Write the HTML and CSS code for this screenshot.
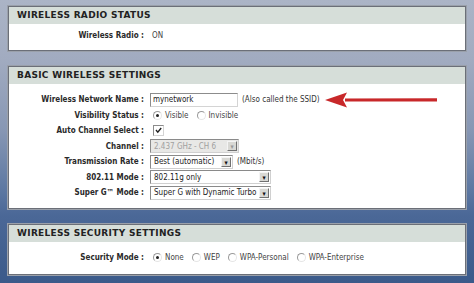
FILE: index.html
```html
<!DOCTYPE html>
<html lang="en">
<head>
  <meta charset="UTF-8" />
  <title>Wireless Settings</title>
  <link rel="stylesheet" href="styles.css">
</head>
<body>
  <div class="page">
    <div class="panel">
      <div class="panel-head">WIRELESS RADIO STATUS</div>
      <div class="panel-body radio-status">
        <div class="row">
          <span class="label">Wireless Radio :</span>
          <span class="value">ON</span>
        </div>
      </div>
    </div>

    <div class="panel">
      <div class="panel-head">BASIC WIRELESS SETTINGS</div>
      <div class="panel-body basic">
        <div class="row">
          <span class="label">Wireless Network Name :</span>
          <span class="value">
            <span class="text-input">mynetwork</span>
            <span class="note">(Also called the SSID)</span>
            <svg class="arrow" width="114" height="16" viewBox="0 0 114 16">
              <path d="M20 6.5 L112 6.2 L112 9.4 L20 9.6 Z" fill="#c8282a"/>
              <path d="M0 8 L22 0.5 L18 8 L22 15.5 Z" fill="#c8282a"/>
            </svg>
          </span>
        </div>
        <div class="row">
          <span class="label">Visibility Status :</span>
          <span class="value">
            <span class="radio on"></span><span class="opt">Visible</span>
            <span class="radio"></span><span class="opt">Invisible</span>
          </span>
        </div>
        <div class="row">
          <span class="label">Auto Channel Select :</span>
          <span class="value">
            <span class="check">
              <svg width="9" height="9" viewBox="0 0 9 9"><path d="M2 4 L3.8 6.2 L7.2 2" fill="none" stroke="#222" stroke-width="1.4"/></svg>
            </span>
          </span>
        </div>
        <div class="row">
          <span class="label">Channel :</span>
          <span class="value">
            <span class="select disabled w-channel"><span class="sel-text">2.437 GHz - CH 6</span><span class="sel-btn">&#9662;</span></span>
          </span>
        </div>
        <div class="row">
          <span class="label">Transmission Rate :</span>
          <span class="value">
            <span class="select w-rate"><span class="sel-text">Best (automatic)</span><span class="sel-btn">&#9662;</span></span>
            <span class="note">(Mbit/s)</span>
          </span>
        </div>
        <div class="row">
          <span class="label">802.11 Mode :</span>
          <span class="value">
            <span class="select w-mode"><span class="sel-text">802.11g only</span><span class="sel-btn">&#9662;</span></span>
          </span>
        </div>
        <div class="row">
          <span class="label">Super G&trade; Mode :</span>
          <span class="value">
            <span class="select w-mode"><span class="sel-text">Super G with Dynamic Turbo</span><span class="sel-btn">&#9662;</span></span>
          </span>
        </div>
      </div>
    </div>

    <div class="panel">
      <div class="panel-head">WIRELESS SECURITY SETTINGS</div>
      <div class="panel-body security">
        <div class="row">
          <span class="label">Security Mode :</span>
          <span class="value">
            <span class="radio on"></span><span class="opt">None</span>
            <span class="radio"></span><span class="opt">WEP</span>
            <span class="radio"></span><span class="opt">WPA-Personal</span>
            <span class="radio"></span><span class="opt">WPA-Enterprise</span>
          </span>
        </div>
      </div>
    </div>
  </div>
</body>
</html>
```

FILE: styles.css
```css
body {
  margin: 0;
  padding: 0;
  font-family: 'DejaVu Sans', 'Liberation Sans', sans-serif;
  font-size: 8px;
  color: #333;
  background: linear-gradient(to bottom, #abb4c6 0px, #a1abc0 60px, #8797b4 130px, #5d78a2 190px, #4b6897 215px, #3b5a8a 283px);
  min-height: 283px;
  overflow: hidden;
}
.page {
  padding: 6px 8px 0 8px;
  display: flex;
  flex-direction: column;
  gap: 15px;
  width: 458px;
}
.panel {
  border: 1px solid #6b6f78;
  box-shadow: 0 0 0 1px #9aa0aa;
  background-color: #FFFFFF;
}
.panel-head {
  background-color: #d6ded9;
  height: 17px;
  line-height: 17px;
  padding-left: 8px;
  font-weight: bold;
  font-size: 9px;
  letter-spacing: 0.3px;
  color: #222;
}
.panel-body {
  display: flex;
  flex-direction: column;
}
.radio-status {
  padding: 4px 0 7px;
}
.basic {
  padding: 8px 0 7px;
}
.basic .row {
  height: 15.5px;
}
.security {
  padding: 8px 0 9px;
}
.row {
  display: flex;
  align-items: center;
  height: 15px;
}
.label {
  width: 135px;
  text-align: right;
  font-weight: bold;
  color: #2a2a2a;
  white-space: nowrap;
  font-family: 'DejaVu Sans Condensed', 'DejaVu Sans', sans-serif;
}
.value {
  display: flex;
  align-items: center;
  margin-left: 6px;
  color: #444;
  white-space: nowrap;
  font-family: 'DejaVu Sans Condensed', 'DejaVu Sans', sans-serif;
}
.radio-status .value {
  margin-left: 8px;
}
.text-input {
  width: 84px;
  height: 12px;
  line-height: 12px;
  border: 1px solid #8c8c8c;
  border-right-color: #d4d4d4;
  border-bottom-color: #d4d4d4;
  padding-left: 2px;
  color: #222;
}
.note {
  margin-left: 4px;
  color: #333;
}
.arrow {
  margin-left: 5px;
}
.radio {
  width: 7px;
  height: 7px;
  border-radius: 50%;
  border: 1px solid #9a9a9a;
  border-right-color: #e6e6e6;
  border-bottom-color: #e6e6e6;
  background-color: #fff;
  position: relative;
  margin: 0 3px 0 3px;
}
.radio.on::after {
  content: "";
  position: absolute;
  left: 2px;
  top: 2px;
  width: 3px;
  height: 3px;
  border-radius: 50%;
  background-color: #222;
}
.opt {
  margin-right: 5px;
  color: #444;
}
.security .radio {
  margin-left: 3px;
}
.security .opt {
  margin-right: 5px;
}
.check {
  width: 9px;
  height: 9px;
  border: 1px solid #8c8c8c;
  border-right-color: #d4d4d4;
  border-bottom-color: #d4d4d4;
  background-color: #fff;
  margin-left: 3px;
  display: flex;
}
.select {
  display: flex;
  align-items: center;
  height: 12px;
  border: 1px solid #8a8a8a;
  border-right-color: #d0d0d0;
  border-bottom-color: #d0d0d0;
  background-color: #fff;
}
.sel-text {
  flex: 1;
  padding-left: 3px;
  color: #222;
  overflow: hidden;
}
.sel-btn {
  width: 10px;
  height: 10px;
  line-height: 10px;
  margin-right: 1px;
  text-align: center;
  font-size: 7px;
  background-color: #d8d8d4;
  border: 1px solid #f4f4f4;
  border-right-color: #707070;
  border-bottom-color: #707070;
  box-sizing: border-box;
  color: #111;
}
.select.disabled {
  background-color: #e8e8e6;
}
.select.disabled .sel-text {
  color: #a0a0a0;
}
.select.disabled .sel-btn {
  color: #999;
}
.w-channel {
  width: 87px;
}
.w-rate {
  width: 81px;
}
.w-mode {
  width: 119px;
}
```
